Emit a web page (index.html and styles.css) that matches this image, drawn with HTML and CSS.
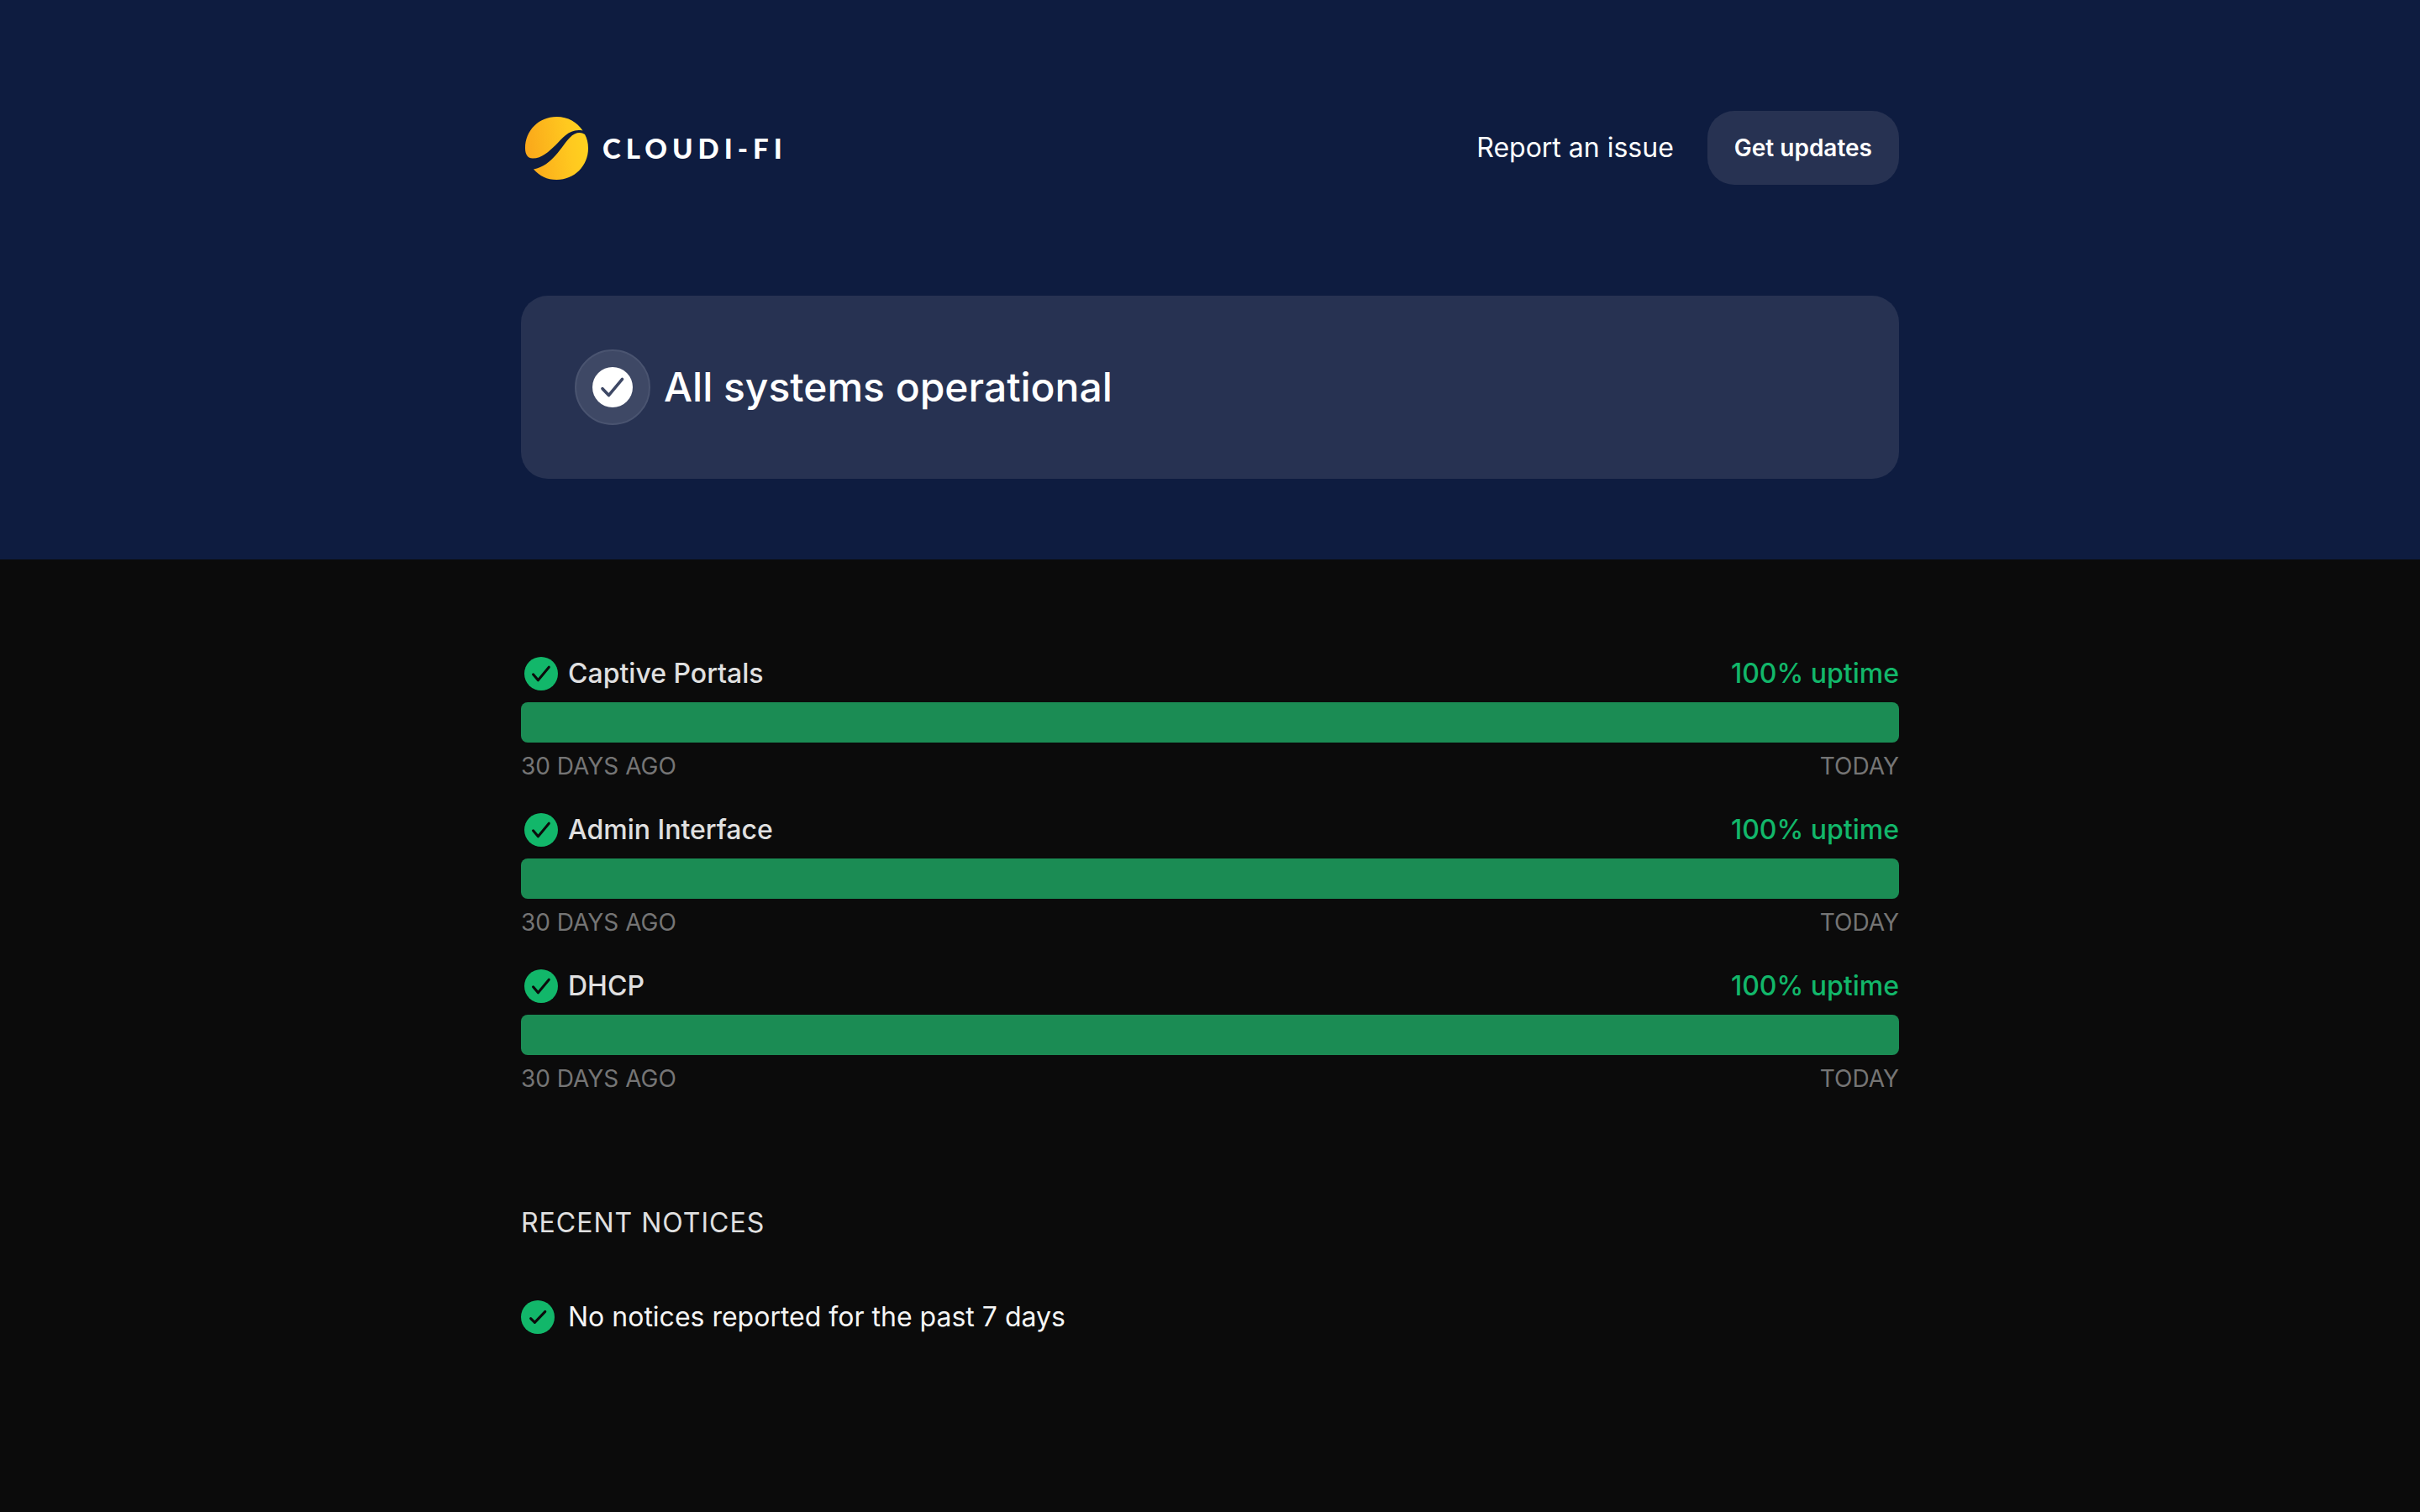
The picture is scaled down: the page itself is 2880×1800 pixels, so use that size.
FILE: index.html
```html
<!DOCTYPE html>
<html lang="en">
<head>
  <meta charset="utf-8">
  <meta name="viewport" content="width=device-width, initial-scale=1">
  <title>Cloudi-Fi Status</title>
  <link rel="stylesheet" href="styles.css">
</head>
<body>
  <header class="hero">
    <div class="container">
      <nav class="topbar">
        <a class="brand" href="#">
          <svg class="brand-mark" viewBox="0 0 84 84" aria-hidden="true">
            <defs>
              <linearGradient id="gold" gradientUnits="userSpaceOnUse" x1="5" x2="80" y1="50" y2="38">
                <stop offset="0" stop-color="#faa61a"/>
                <stop offset="0.7" stop-color="#ffc81f"/>
                <stop offset="1" stop-color="#ffd21f"/>
              </linearGradient>
            </defs>
            <path fill="url(#gold)" d="M73.500 21.500C67 11.500 56 5 42.500 5C21 5 5 21.500 5 42.500C5 50 8 54.500 14 54.500C25 54.500 33 46.500 41 39C50 30 58 18.500 73.500 21.500Z"/>
            <path fill="url(#gold)" d="M15 67.500C22 75.500 31 80 42.500 80C63.500 80 80 63.500 80 42.500C80 36 78.500 30.500 76 26C71 22.500 64 23.500 58 30C48 40 38 63 15 67.500Z"/>
          </svg>
          <span class="brand-name">CLOUDI-FI</span>
        </a>
        <div class="actions">
          <a class="report" href="#">Report an issue</a>
          <button class="updates" type="button">Get updates</button>
        </div>
      </nav>
      <section class="status">
        <span class="status-badge">
          <svg class="status-icon" viewBox="0 0 40 40" aria-hidden="true">
            <circle class="disc" cx="20" cy="20" r="20"/>
            <path class="tick" d="M10 21.400L16.200 28L29.600 12"/>
          </svg>
        </span>
        <h1 class="status-title">All systems operational</h1>
      </section>
    </div>
  </header>
  <main class="container">
    <section class="components">
      <article class="component">
        <div class="component-head">
          <h2 class="component-name">
            <svg class="check inset" viewBox="0 0 40 40" aria-hidden="true"><circle class="disc" cx="20" cy="20" r="20"/><path class="tick" d="M10.500 20.800L16.400 27.800L29.300 12.200"/></svg>
            Captive Portals
          </h2>
          <span class="uptime">100% uptime</span>
        </div>
        <div class="bar"></div>
        <div class="range"><span>30 DAYS AGO</span><span>TODAY</span></div>
      </article>
      <article class="component">
        <div class="component-head">
          <h2 class="component-name">
            <svg class="check inset" viewBox="0 0 40 40" aria-hidden="true"><circle class="disc" cx="20" cy="20" r="20"/><path class="tick" d="M10.500 20.800L16.400 27.800L29.300 12.200"/></svg>
            Admin Interface
          </h2>
          <span class="uptime">100% uptime</span>
        </div>
        <div class="bar"></div>
        <div class="range"><span>30 DAYS AGO</span><span>TODAY</span></div>
      </article>
      <article class="component">
        <div class="component-head">
          <h2 class="component-name">
            <svg class="check inset" viewBox="0 0 40 40" aria-hidden="true"><circle class="disc" cx="20" cy="20" r="20"/><path class="tick" d="M10.500 20.800L16.400 27.800L29.300 12.200"/></svg>
            DHCP
          </h2>
          <span class="uptime">100% uptime</span>
        </div>
        <div class="bar"></div>
        <div class="range"><span>30 DAYS AGO</span><span>TODAY</span></div>
      </article>
    </section>
    <section class="notices">
      <h2 class="notices-title">RECENT NOTICES</h2>
      <p class="notice">
        <svg class="check" viewBox="0 0 40 40" aria-hidden="true"><circle class="disc" cx="20" cy="20" r="20"/><path class="tick" d="M11.600 21.600L16.400 26.400L28.800 13.400"/></svg>
        No notices reported for the past 7 days
      </p>
    </section>
  </main>
</body>
</html>
```

FILE: styles.css
```css
* {
  box-sizing: border-box;
}

body {
  margin: 0;
  background: #0b0b0b;
  color: #f5f5f5;
  font-family: Inter, "Liberation Sans", sans-serif;
  font-size: 32px;
  line-height: 48px;
}

h1,
h2,
p {
  margin: 0;
}

.container {
  max-width: 1704px;
  margin: 0 auto;
  padding: 0 32px;
}

.hero {
  padding: 132px 0 96px;
  background: #0e1c40;
  color: #fff;
}

.topbar {
  display: flex;
  align-items: center;
  justify-content: space-between;
  margin-bottom: 132px;
}

.brand {
  display: flex;
  align-items: center;
  gap: 13px;
  color: #fff;
  text-decoration: none;
}

.brand-mark {
  width: 84px;
  height: 84px;
}

.brand-name {
  font-family: Lato, sans-serif;
  font-size: 33px;
  font-weight: 900;
  letter-spacing: 6px;
}

.actions {
  display: flex;
  align-items: center;
  gap: 40px;
}

.report {
  color: #fff;
  text-decoration: none;
}

.updates {
  padding: 20px 32px;
  border: 0;
  border-radius: 32px;
  background: #273252;
  color: #fff;
  font: 600 28px/48px Inter, "Liberation Sans", sans-serif;
}

.status {
  display: flex;
  align-items: center;
  gap: 16px;
  padding: 64px;
  border-radius: 32px;
  background: #273252;
}

.status-badge {
  display: grid;
  place-items: center;
  width: 90px;
  height: 90px;
  border: 2px solid #4a5470;
  border-radius: 50%;
  background: #3e4865;
}

.status-icon {
  width: 48px;
  height: 48px;
}

.status-title {
  font-size: 48px;
  font-weight: 500;
  line-height: 64px;
}

.disc {
  fill: #12b76a;
}

.tick {
  fill: none;
  stroke: #0b0b0b;
  stroke-width: 3;
  stroke-linecap: round;
  stroke-linejoin: round;
}

.status-icon .disc {
  fill: #fff;
}

.status-icon .tick {
  stroke: #3e4865;
}

.components {
  display: grid;
  gap: 32px;
  padding-top: 112px;
}

.component-head,
.range {
  display: flex;
  align-items: center;
  justify-content: space-between;
}

.component-head {
  margin-bottom: 10px;
}

.component-name {
  display: flex;
  align-items: center;
  gap: 8px;
  color: #e0e0e0;
  font-size: 32px;
  font-weight: 500;
}

.uptime {
  color: #12b76a;
  font-weight: 500;
}

.check {
  width: 40px;
  height: 40px;
}

.check.inset {
  margin: 0 4px;
}

.bar {
  height: 48px;
  border-radius: 8px;
  background: #1b8c54;
}

.range {
  margin-top: 8px;
  color: #757575;
  font-size: 28px;
  line-height: 40px;
}

.notices {
  padding: 128px 0 64px;
}

.notices-title {
  margin-bottom: 64px;
  color: #e0e0e0;
  font-size: 32px;
  font-weight: 400;
  letter-spacing: 1px;
}

.notice {
  display: flex;
  align-items: center;
  gap: 16px;
}
```
